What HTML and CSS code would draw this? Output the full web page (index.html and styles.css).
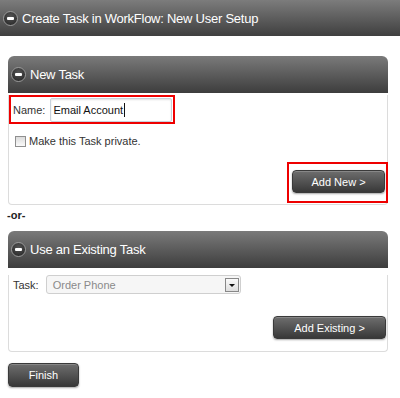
FILE: index.html
```html
<!DOCTYPE html>
<html>
<head>
<meta charset="utf-8">
<link rel="stylesheet" href="styles.css">
</head>
<body>
<div class="topbar">
  <span class="minus"></span>
  <span class="title">Create Task in WorkFlow: New User Setup</span>
</div>

<div class="panel p1">
  <div class="phead"><span class="minus"></span><span class="title">New Task</span></div>
  <div class="pbody">
    <div class="namebox">
      <span class="lbl">Name:</span>
      <div class="input">Email Account<span class="caret"></span></div>
    </div>
    <div class="chkrow"><span class="chk"></span><span class="lbl">Make this Task private.</span></div>
    <div class="btnrow">
      <div class="redbtn"><div class="btn addnew">Add New &gt;</div></div>
    </div>
  </div>
</div>

<div class="or">-or-</div>

<div class="panel p2">
  <div class="phead"><span class="minus"></span><span class="title">Use an Existing Task</span></div>
  <div class="pbody">
    <div class="taskrow">
      <span class="lbl">Task:</span>
      <div class="select"><span class="opt">Order Phone</span><span class="arrow"></span></div>
    </div>
    <div class="btnrow2"><div class="btn addex">Add Existing &gt;</div></div>
  </div>
</div>

<div class="btn finish">Finish</div>
</body>
</html>
```
FILE: styles.css
```css
* { box-sizing: border-box; }
body {
  margin: 0;
  font-family: "Liberation Sans", Arial, sans-serif;
  background: #fff;
  width: 400px;
  height: 398px;
  overflow: hidden;
}
.topbar {
  height: 36px;
  background: linear-gradient(#7c7c7c, #3f3f3f);
  display: flex;
  align-items: center;
  padding-left: 3px;
}
.minus {
  width: 15px;
  height: 15px;
  border-radius: 50%;
  background: radial-gradient(circle at 50% 35%, #555, #222);
  border: 1px solid #9a9a9a;
  position: relative;
  flex: none;
}
.minus::after {
  content: "";
  position: absolute;
  left: 3px;
  right: 3px;
  top: 5px;
  height: 3px;
  background: #fff;
  border-radius: 1px;
}
.title {
  color: #fff;
  font-size: 13px;
  letter-spacing: -0.25px;
  margin-left: 4px;
}
.panel {
  margin-left: 8px;
  width: 380px;
}
.p1 { margin-top: 20px; }
.phead {
  height: 37px;
  border-radius: 6px 6px 0 0;
  background: linear-gradient(#7a7a7a, #3d3d3d);
  display: flex;
  align-items: center;
  padding-left: 3px;
}
.pbody {
  border: 1px solid #dcdcdc;
  border-top: none;
  border-radius: 0 0 4px 4px;
  background: #fff;
}
.lbl {
  font-size: 11px;
  color: #333;
}
.namebox {
  margin-top: 2px;
  width: 166px;
  height: 29px;
  border: 2px solid #e00;
  display: flex;
  align-items: center;
  padding-left: 2px;
}
.input {
  margin-left: 5px;
  width: 122px;
  height: 24px;
  border: 1px solid #c8d2dc;
  border-radius: 2px;
  box-shadow: inset 0 1px 2px rgba(0,0,0,0.12);
  font-size: 11px;
  color: #111;
  display: flex;
  align-items: center;
  padding-left: 2px;
}
.caret {
  display: inline-block;
  width: 1px;
  height: 14px;
  background: #111;
  margin-left: 1px;
}
.chkrow {
  margin-top: 7px;
  height: 20px;
  display: flex;
  align-items: center;
  padding-left: 6px;
}
.chk {
  width: 11px;
  height: 11px;
  border: 1px solid #8f8f8f;
  background: linear-gradient(#dcdcdc, #fafafa);
  margin-right: 3px;
}
.btnrow {
  display: flex;
  justify-content: flex-end;
  margin-top: 11px;
}
.redbtn {
  border: 2px solid #e00;
  padding: 6px 1px 8px 3px;
  margin-right: -1px;
  margin-bottom: 1px;
}
.btn {
  height: 23px;
  border-radius: 4px;
  background: linear-gradient(#6e6e6e, #383838);
  border: 1px solid #3a3a3a;
  box-shadow: 0 1px 2px rgba(0,0,0,0.35), inset 0 1px 0 rgba(255,255,255,0.18);
  color: #fff;
  font-size: 11px;
  display: flex;
  align-items: center;
  justify-content: center;
}
.addnew { width: 93px; }
.or {
  font-size: 11px;
  font-weight: bold;
  color: #222;
  margin-left: 7px;
  height: 16px;
  line-height: 16px;
  margin-top: 2px;
}
.p2 { margin-top: 8px; }
.taskrow {
  display: flex;
  align-items: center;
  margin-top: 7px;
  padding-left: 4px;
}
.select {
  margin-left: 7px;
  width: 195px;
  height: 19px;
  border: 1px solid #cfcfcf;
  border-radius: 3px;
  background: #f6f6f6;
  display: flex;
  align-items: center;
  justify-content: space-between;
  padding: 0 1px 0 6px;
}
.opt {
  font-size: 11px;
  color: #8a8a8a;
}
.arrow {
  width: 14px;
  height: 14px;
  border: 1px solid #888;
  background: linear-gradient(#fafafa, #dedede);
  position: relative;
}
.arrow::after {
  content: "";
  position: absolute;
  left: 3px;
  top: 5px;
  border-left: 3px solid transparent;
  border-right: 3px solid transparent;
  border-top: 3px solid #111;
}
.btnrow2 {
  display: flex;
  justify-content: flex-end;
  padding-right: 1px;
  margin-top: 22px;
  margin-bottom: 12px;
}
.addex { width: 113px; }
.finish {
  width: 71px;
  height: 24px;
  margin-left: 8px;
  margin-top: 11px;
}
```
